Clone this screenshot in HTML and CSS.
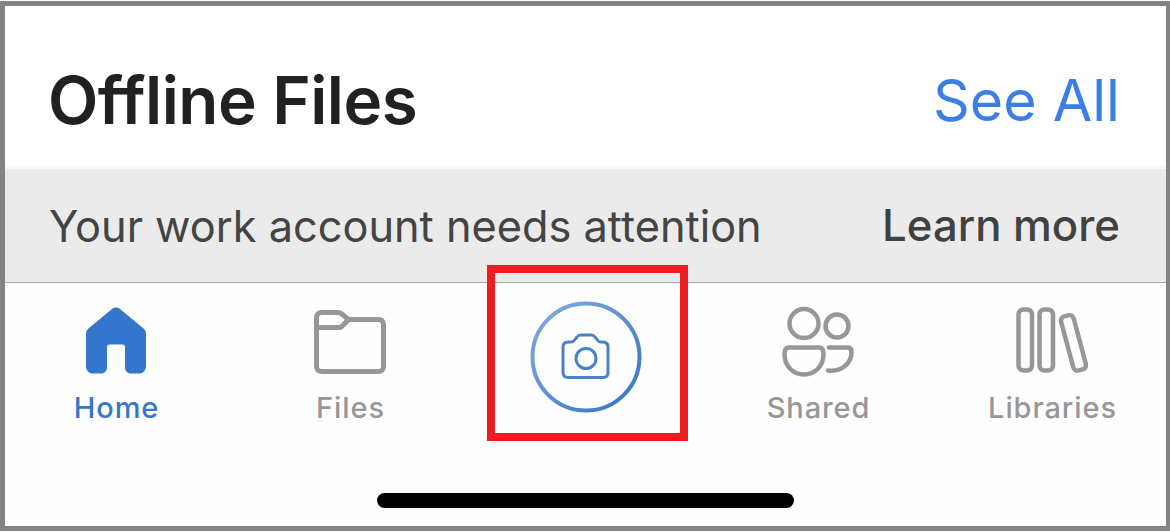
FILE: index.html
```html
<!DOCTYPE html>
<html lang="en">
<head>
<meta charset="utf-8">
<title>Offline Files</title>
<link rel="stylesheet" href="styles.css">
</head>
<body>
<div class="frame">
  <header class="header">
    <h1 class="title">Offline Files</h1>
    <a class="see-all">See All</a>
  </header>
  <section class="banner">
    <span class="banner-text">Your work account needs attention</span>
    <a class="banner-link">Learn more</a>
  </section>
  <nav class="tabs">
    <div class="tab tab-active">
      <svg class="icon" width="72" height="72" viewBox="0 0 72 72"><path class="fill-blue" d="M36 1.500C37.500 1.500 38.800 2 40 3L63 22C65 23.700 66 25.500 66 28V60C66 64 63.500 67.500 59 67.500H51C47.500 67.500 45 65 45 61.500V41C45 39.500 44 38.500 42.500 38.500H29.500C28 38.500 27 39.500 27 41V61.500C27 65 24.500 67.500 21 67.500H13C8.500 67.500 6 64 6 60V28C6 25.500 7 23.700 9 22L32 3C33.200 2 34.500 1.500 36 1.500Z"/></svg>
      <span class="label">Home</span>
    </div>
    <div class="tab">
      <svg class="icon" width="72" height="72" viewBox="0 0 72 72"><path class="line" d="M2.500 22V11.500C2.500 8.500 4.500 6.500 7.500 6.500H24C25.500 6.500 26.500 7 27.500 7.800L34.500 13.500H64.500C67.500 13.500 69.500 15.500 69.500 18.500V60.500C69.500 63.500 67.500 65.500 64.500 65.500H7.500C4.500 65.500 2.500 63.500 2.500 60.500V22ZM2.500 21.500H24.500C26 21.500 27 21 28 20.200L34.500 13.500"/></svg>
      <span class="label">Files</span>
    </div>
    <div class="tab tab-camera">
      <svg class="camera" width="112" height="112" viewBox="0 0 112 112">
        <defs>
          <linearGradient id="ring" x1="0" y1="0" x2="1" y2="1">
            <stop offset="0" stop-color="#84aedb"/>
            <stop offset="1" stop-color="#3473c4"/>
          </linearGradient>
        </defs>
        <circle class="ring" cx="56" cy="56" r="53.500"/>
        <path class="cam-line" d="M38 41H41C43 41 44 40 45 38.500L47 36C48 34.500 49 34 51 34H61C63 34 64 34.500 65 36L67 38.500C68 40 69 41 71 41H73C76.500 41 78 42.500 78 46V71.500C78 75 76.500 76.500 73 76.500H38C34.500 76.500 33 75 33 71.500V46C33 42.500 34.500 41 38 41Z"/>
        <circle class="cam-line" cx="56" cy="57.500" r="10"/>
      </svg>
    </div>
    <div class="tab">
      <svg class="icon" width="72" height="72" viewBox="0 0 72 72">
        <circle class="line-thin" cx="22" cy="17.500" r="14.500"/>
        <circle class="line-thin" cx="55" cy="20" r="11.500"/>
        <path class="line-thin" d="M2.500 48C2.500 44 4 41.500 7 41.500H37C40 41.500 41.500 44 41.500 48C41.500 60 33 68.500 22 68.500C11 68.500 2.500 60 2.500 48Z"/>
        <path class="line-thin" d="M47 41.500H66C68.500 41.500 69.500 43 69.500 46C69.500 58 59 66 46 64.500"/>
      </svg>
      <span class="label">Shared</span>
    </div>
    <div class="tab">
      <svg class="icon" width="72" height="72" viewBox="0 0 72 72">
        <rect class="line-thin" x="2.500" y="3.500" width="13.500" height="61" rx="5"/>
        <rect class="line-thin" x="23.500" y="3.500" width="13.500" height="61" rx="5"/>
        <rect class="line-thin" x="51" y="9" width="13" height="56" rx="4.500" transform="rotate(-15 57 37)"/>
      </svg>
      <span class="label">Libraries</span>
    </div>
  </nav>
  <div class="home-bar"><span class="home-indicator"></span></div>
  <div class="highlight"></div>
</div>
</body>
</html>
```
FILE: styles.css
```css
* { box-sizing: border-box; }
html, body { margin: 0; height: 100%; background: #fff; }
body { padding: 1px 0; font-family: Inter, "Liberation Sans", sans-serif; overflow: hidden; }
.frame {
  position: relative;
  width: 1170px;
  height: 530px;
  border: solid #838383;
  border-width: 5px 4px 5px 5px;
  background: #fefefe;
  display: flex;
  flex-direction: column;
  overflow: hidden;
}
.header {
  height: 163px;
  padding: 28px 46px 0 43px;
  background: #fff;
  border-bottom: 3px solid #f8f8f8;
  display: flex;
  justify-content: space-between;
  align-items: center;
}
.title { margin: 0; font-size: 65.500px; font-weight: 600; color: #212121; letter-spacing: -0.5px; }
.see-all { font-size: 57.300px; color: #3c7de6; }
.banner {
  height: 114px;
  padding: 0 46px 0 44px;
  background: #ebebeb;
  border-bottom: 1px solid #a9a9a9;
  display: flex;
  justify-content: space-between;
  align-items: center;
  color: #444;
  font-size: 43.300px;
}
.banner-link { font-size: 43.700px; font-weight: 500; color: #414141; }
.tabs {
  display: grid;
  grid-template-columns: repeat(5, 234px);
  justify-content: center;
  height: 205px;
  padding-right: 2px;
}
.tab {
  padding-top: 23px;
  display: flex;
  flex-direction: column;
  align-items: center;
  gap: 12px;
  color: #979797;
}
.tab-active { color: #3876c8; }
.tab-camera { padding: 18px 0 0 2px; }
.icon, .camera { display: block; }
.icon { transform: translateX(-1px); }
.label { font-size: 29px; font-weight: 500; line-height: 35px; letter-spacing: 0.9px; }
.fill-blue { fill: #3476ce; }
.line { fill: none; stroke: #979797; stroke-width: 5; stroke-linecap: round; stroke-linejoin: round; }
.line-thin { fill: none; stroke: #979797; stroke-width: 4.500; stroke-linecap: round; stroke-linejoin: round; }
.ring { fill: none; stroke: url(#ring); stroke-width: 4; }
.cam-line { fill: none; stroke: #4a82c8; stroke-width: 3; stroke-linejoin: round; }
.home-bar { display: flex; justify-content: center; flex: 1; }
.home-indicator { display: block; width: 417px; height: 15px; border-radius: 8px; background: #000; margin-top: 5px; }
.highlight {
  position: absolute;
  left: 482px;
  top: 259px;
  width: 201px;
  height: 176px;
  border: 8px solid #ed1c24;
}
```
